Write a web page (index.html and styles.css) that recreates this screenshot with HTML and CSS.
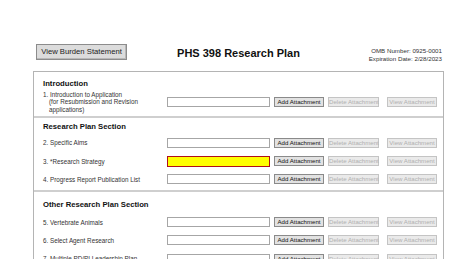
FILE: index.html
```html
<!DOCTYPE html>
<html lang="en">
<head>
  <meta charset="UTF-8">
  <meta name="viewport" content="width=device-width, initial-scale=1.0">
  <title>PHS 398 Research Plan</title>
  <link rel="stylesheet" href="styles.css">
</head>
<body>
  <div class="page">
    <div class="head">
      <div><button class="burden">View Burden Statement</button></div>
      <h1 class="title">PHS 398 Research Plan</h1>
      <div class="omb">OMB Number: 0925-0001<br>Expiration Date: 2/28/2023</div>
    </div>
    <div class="panel">
      <section class="sec sec-intro">
        <h2>Introduction</h2>
        <div class="row row-tall">
          <div class="label">1. Introduction to Application<span class="indent">(for Resubmission and Revision<br>applications)</span></div>
          <input class="file" type="text">
          <button class="add">Add Attachment</button>
          <button class="del" disabled>Delete Attachment</button>
          <button class="view" disabled>View Attachment</button>
        </div>
      </section>
      <section class="sec sec-plan">
        <h2>Research Plan Section</h2>
        <div class="row">
          <div class="label">2. Specific Aims</div>
          <input class="file" type="text">
          <button class="add">Add Attachment</button>
          <button class="del" disabled>Delete Attachment</button>
          <button class="view" disabled>View Attachment</button>
        </div>
        <div class="row">
          <div class="label">3. *Research Strategy</div>
          <input class="file required" type="text">
          <button class="add">Add Attachment</button>
          <button class="del" disabled>Delete Attachment</button>
          <button class="view" disabled>View Attachment</button>
        </div>
        <div class="row">
          <div class="label">4. Progress Report Publication List</div>
          <input class="file" type="text">
          <button class="add">Add Attachment</button>
          <button class="del" disabled>Delete Attachment</button>
          <button class="view" disabled>View Attachment</button>
        </div>
      </section>
      <section class="sec sec-other">
        <h2>Other Research Plan Section</h2>
        <div class="row">
          <div class="label">5. Vertebrate Animals</div>
          <input class="file" type="text">
          <button class="add">Add Attachment</button>
          <button class="del" disabled>Delete Attachment</button>
          <button class="view" disabled>View Attachment</button>
        </div>
        <div class="row">
          <div class="label">6. Select Agent Research</div>
          <input class="file" type="text">
          <button class="add">Add Attachment</button>
          <button class="del" disabled>Delete Attachment</button>
          <button class="view" disabled>View Attachment</button>
        </div>
        <div class="row">
          <div class="label">7. Multiple PD/PI Leadership Plan</div>
          <input class="file" type="text">
          <button class="add">Add Attachment</button>
          <button class="del" disabled>Delete Attachment</button>
          <button class="view" disabled>View Attachment</button>
        </div>
      </section>
    </div>
  </div>
</body>
</html>
```

FILE: styles.css
```css
body{
  margin: 0;
  background: #fff;
  color: #222;
  font-family: "Liberation Sans", Arial, sans-serif;
}
.page{
  width: 411px;
  margin-left: 33px;
  padding-top: 40px;
}
.head{
  display: grid;
  grid-template-columns: 1fr auto 1fr;
  height: 31px;
}
.burden{
  margin-left: 3px;
  width: 91px;
  height: 16px;
  padding: 0;
  font-family: inherit;
  font-size: 7.7px;
  color: #222;
  background: #dcdcdc;
  border: 1px solid #8c8c8c;
  box-shadow: inset -1px -1px 0 #b8b8b8;
}
.title{
  margin: 0;
  padding-top: 8px;
  font-size: 11px;
  line-height: 11px;
  color: #111;
}
.omb{
  justify-self: end;
  padding-top: 7px;
  padding-right: 2px;
  text-align: right;
  font-size: 6.2px;
  line-height: 7.5px;
  color: #333;
}
.panel{
  border: 1px solid #b4b4b4;
  border-bottom: none;
  height: 200px;
}
.sec{
  padding-left: 9px;
}
.sec + .sec{
  border-top: 2px solid #cfcfcf;
}
.sec h2{
  margin: 0;
  font-size: 7.7px;
  line-height: 9px;
  color: #111;
}
.sec-intro{
  padding-top: 7px;
  padding-bottom: 3px;
}
.sec-intro h2{
  margin-bottom: 3px;
}
.sec-plan{
  padding-top: 3.5px;
  padding-bottom: 1.5px;
}
.sec-plan h2{
  margin-bottom: 3.5px;
}
.sec-other{
  padding-top: 8px;
}
.sec-other h2{
  margin-bottom: 4px;
}
.row{
  display: grid;
  grid-template-columns: 120px 103px 50px 51px 54px;
  column-gap: 4px;
  align-items: center;
  height: 18.2px;
}
.row-tall{
  height: 22px;
}
.label{
  font-size: 6.3px;
  line-height: 7.2px;
  color: #333;
}
.indent{
  display: block;
  padding-left: 6px;
}
.file{
  box-sizing: border-box;
  width: 103px;
  height: 10px;
  margin: 0;
  padding: 0;
  border: 1px solid #a6a6a6;
  background: #fff;
}
.file.required{
  height: 11px;
  border: 1.5px solid #b0101a;
  background: #ffff00;
}
.row button{
  box-sizing: border-box;
  height: 10px;
  margin: 0;
  padding: 0;
  font-family: inherit;
  font-size: 6.1px;
  line-height: 8px;
  white-space: nowrap;
  border: 1px solid #8a8a8a;
  background: #e2e2e2;
  color: #111;
}
.row .del,.row .view{
  color: #b0b0b0;
  border-color: #c4c4c4;
  background: #eaeaea;
}
.row .view{
  margin-left: 4px;
}
```
